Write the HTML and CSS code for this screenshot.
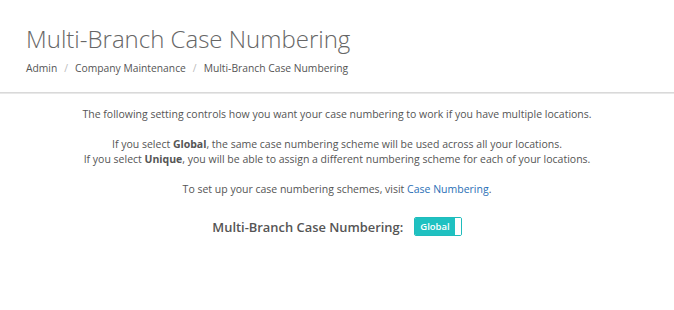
FILE: index.html
```html
<!DOCTYPE html>
<html>
<head>
<meta charset="utf-8">
<link rel="stylesheet" href="styles.css">
</head>
<body>
<div class="header">
  <h1 class="title">Multi-Branch Case Numbering</h1>
  <div class="crumbs">
    <span>Admin</span><span class="sep">/</span><span>Company Maintenance</span><span class="sep">/</span><span>Multi-Branch Case Numbering</span>
  </div>
</div>
<div class="content">
  <p class="desc">The following setting controls how you want your case numbering to work if you have multiple locations.</p>
  <p class="desc">If you select <b>Global</b>, the same case numbering scheme will be used across all your locations.<br>If you select <b>Unique</b>, you will be able to assign a different numbering scheme for each of your locations.</p>
  <p class="desc">To set up your case numbering schemes, visit <a class="link" href="#">Case Numbering</a>.</p>
  <div class="setting">
    <span class="label">Multi-Branch Case Numbering:</span>
    <span class="toggle"><span class="toggle-on">Global</span><span class="handle"></span></span>
  </div>
</div>
</body>
</html>
```

FILE: styles.css
```css
html, body {
  margin: 0;
  padding: 0;
  background: #fff;
  font-family: "Open Sans", "Liberation Sans", sans-serif;
  color: #555;
}
.header {
  padding: 23px 26px 17px;
  border-bottom: 1px solid #d9d9d9;
  box-shadow: 0 1px 0 #e8e8e8;
}
.title {
  margin: 0;
  font-size: 24px;
  font-weight: 300;
  line-height: 32px;
  color: #666;
}
.crumbs {
  margin-top: 6px;
  font-size: 10.3px;
  line-height: 14px;
  color: #555;
}
.sep {
  color: #bbb;
  margin: 0 7px;
}
.content {
  padding-top: 14px;
  text-align: center;
}
.desc {
  margin: 0 0 15px;
  font-size: 10.5px;
  line-height: 15px;
  color: #555;
}
.desc b {
  font-weight: 700;
}
.link {
  color: #2a6fb6;
  text-decoration: none;
}
.setting {
  margin-top: 20px;
  display: flex;
  justify-content: center;
  align-items: center;
  gap: 11px;
  padding-left: 0;
}
.label {
  font-size: 12.9px;
  font-weight: 600;
  color: #555;
}
.toggle {
  display: inline-flex;
  align-items: stretch;
  height: 17px;
  border: 1px solid #1fbcbc;
  border-radius: 2px;
  background: #fff;
  overflow: hidden;
}
.toggle-on {
  background: #1fc1c1;
  color: #fff;
  font-size: 9.5px;
  font-weight: 600;
  line-height: 17px;
  padding: 0 5px;
  font-family: "Open Sans", "Liberation Sans", sans-serif;
}
.handle {
  width: 6px;
  background: #fff;
}
```
